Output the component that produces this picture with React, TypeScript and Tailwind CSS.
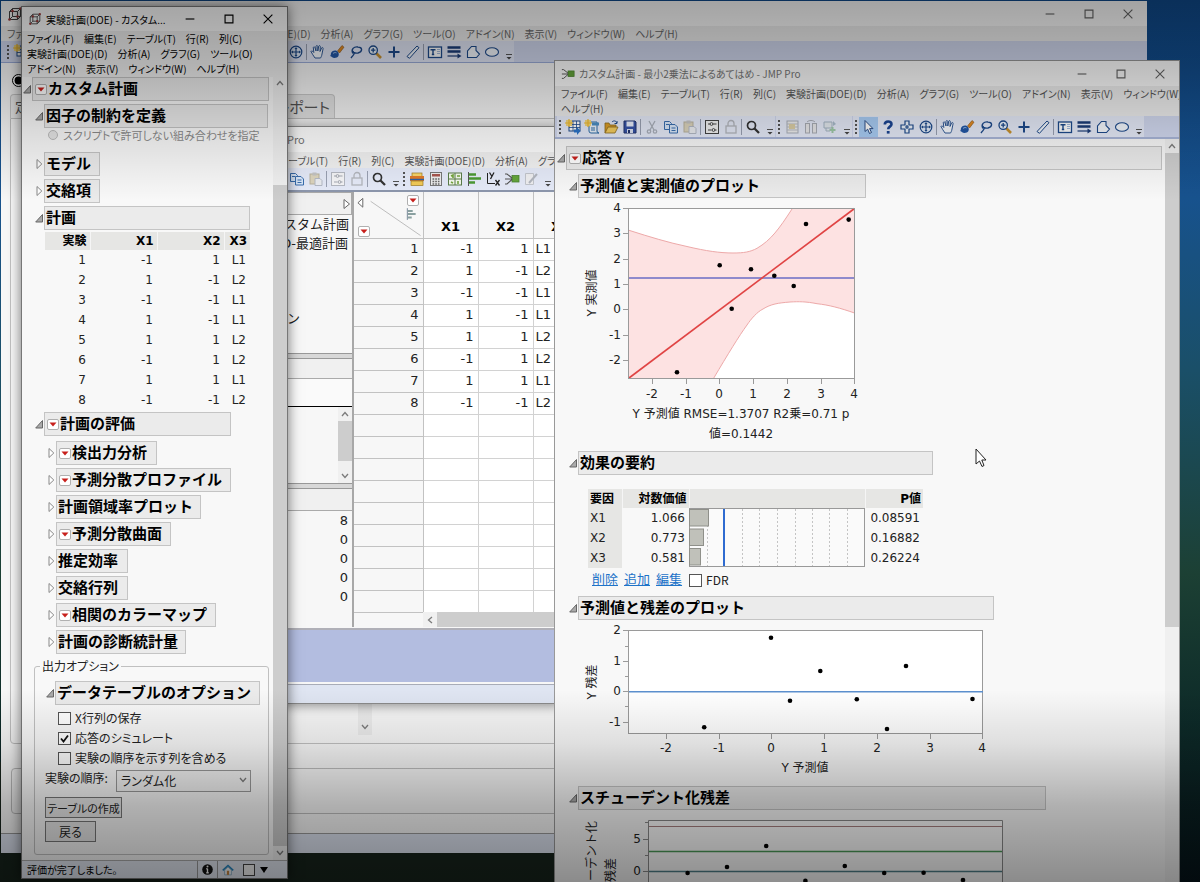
import React from "react";

const UI = "font-['Noto_Sans_CJK_JP',sans-serif] [font-feature-settings:'palt']";
const DATA = "font-['DejaVu_Sans','Noto_Sans_CJK_JP',sans-serif]";

/* ---------- icons ---------- */

const navy = "#1d4a8c";

const glyphs: Record<string, React.ReactNode> = {
  newTable: (
    <>
      <rect x="4" y="2" width="11" height="10" fill="#fff" stroke={navy} />
      <path d="M4 5.500h11M4 8.500h11M8 2v10M11.500 2v10" stroke={navy} fill="none" strokeWidth=".8" />
      <path d="M1 1h6v6H1z" fill="#f3d67a" />
      <path d="M4 0v8M0 4h8" stroke="#f0b92e" strokeWidth="1.200" />
      <path d="M9 10.500h3V8l3.500 4-3.500 4v-2.500H9z" fill="#2b74c9" />
    </>
  ),
  newScript: (
    <>
      <path d="M5 3h8v9a2 2 0 0 0 2 2H7a2 2 0 0 1-2-2z" fill="#eaf2fb" stroke="#2d6ca8" />
      <path d="M7 9h4M7 11h4" stroke="#2d6ca8" />
      <path d="M1 1h6v6H1z" fill="#f3d67a" />
      <path d="M4 0v8M0 4h8" stroke="#f0b92e" strokeWidth="1.200" />
      <path d="M8 3.500h7v3H8z" fill="#4b8fc4" />
    </>
  ),
  open: (
    <>
      <path d="M2 14V4h4l1 2h6v3" fill="#d99b25" stroke="#8a6a20" strokeWidth=".8" />
      <path d="M2 14l3-6h10l-3 6z" fill="#f5cd5f" stroke="#8a6a20" strokeWidth=".8" />
      <path d="M9 3c2-2 4-1 5 1m0-2v2.500h-2.500" stroke={navy} fill="none" />
    </>
  ),
  save: (
    <>
      <path d="M2 2h11l1 1v11H2z" fill="#3553a8" stroke="#22346e" />
      <rect x="4.500" y="2.500" width="7" height="5" fill="#e8eefc" />
      <rect x="5" y="10" width="6" height="4" fill="#dbe2f3" />
      <rect x="6" y="11" width="2" height="3" fill="#22346e" />
    </>
  ),
  cut: (
    <g stroke="#aab0bb" fill="none" strokeWidth="1.300">
      <path d="M5 2l5 9M11 2L6 11" />
      <circle cx="5" cy="12.500" r="1.700" />
      <circle cx="11" cy="12.500" r="1.700" />
    </g>
  ),
  copy: (
    <g fill="#dbe9fb" stroke="#3a6fb0">
      <path d="M1.500 2.500h5l2 2v6h-7z" />
      <path d="M6.500 5.500h5.500l2.500 2.500v6h-8z" />
      <path d="M3 5.500h3M8.500 9h4M8.500 11.500h4" />
    </g>
  ),
  paste: (
    <>
      <rect x="2" y="3" width="9" height="10" fill="#ddd5bd" stroke="#b9b39f" />
      <rect x="4.500" y="1.500" width="4" height="3" fill="#c4c4c4" />
      <path d="M7 7.500h5l2 2v5H7z" fill="#eceef2" stroke="#b4bac6" />
    </>
  ),
  toggle: (
    <>
      <rect x="1.500" y="1.500" width="13" height="13" fill="#f2f2f2" stroke="#444" />
      <path d="M4 5h2M9 5h3.500M4 11h3.500M11 11h1.500" stroke="#444" />
      <circle cx="7.500" cy="5" r="1.400" fill="#fff" stroke="#444" />
      <circle cx="9.500" cy="11" r="1.400" fill="#fff" stroke="#444" />
    </>
  ),
  toggleOff: (
    <>
      <rect x="1.500" y="1.500" width="13" height="13" fill="#f6f6f8" stroke="#b5b9c2" />
      <path d="M4 5h2M9 5h3.500M4 11h3.500M11 11h1.500" stroke="#a5a9b2" />
      <circle cx="7.500" cy="5" r="1.400" fill="none" stroke="#a5a9b2" />
      <circle cx="9.500" cy="11" r="1.400" fill="none" stroke="#a5a9b2" />
    </>
  ),
  lock: (
    <g stroke="#b4b7be" fill="none" strokeWidth="1.300">
      <path d="M5 7V4.500a3 3 0 0 1 6 0V7" />
      <rect x="3" y="7" width="10" height="7" />
    </g>
  ),
  search: (
    <g stroke="#333" fill="none">
      <circle cx="6.500" cy="6.500" r="4" strokeWidth="1.700" />
      <path d="M9.500 9.500l4.500 4.500" strokeWidth="2.300" />
    </g>
  ),
  dimDoc: (
    <>
      <rect x="3" y="2" width="11" height="12" fill="#eee" stroke="#a9afba" />
      <path d="M3 5h11M3 8h11M3 11h11" stroke="#b7bcc5" />
      <rect x="5" y="5" width="6" height="5" fill="#dccfa6" />
    </>
  ),
  dimCols: (
    <g stroke="#a9adb5" fill="#e8e8ea">
      <rect x="2.500" y="4.500" width="4" height="9.500" />
      <rect x="9.500" y="4.500" width="4" height="9.500" />
      <path d="M4 3c2-2 6-2 8 0" fill="none" />
    </g>
  ),
  dimFlow: (
    <>
      <path d="M2 3h8v6H2zM4 9v3h4" stroke="#a5b5c4" fill="#e3e9ee" />
      <path d="M10.500 8v6M7.500 11h6" stroke="#9fcaa8" strokeWidth="2" />
      <path d="M11 2l3 3-3 2z" fill="#a9bccb" />
    </>
  ),
  arrow: <path d="M4 1.500v11l2.700-2.300L8.500 14.500l2-1-1.900-3.900H12z" fill="#fff" stroke="#2a4d86" />,
  help: (
    <>
      <path d="M4.800 5.500c0-4 6.700-4 6.700-.3 0 2.500-3.300 2.300-3.300 5" stroke="#1b4593" strokeWidth="2.600" fill="none" />
      <rect x="6.800" y="12" width="2.800" height="2.600" fill="#1b4593" />
    </>
  ),
  cross: (
    <path
      d="M6 2h4v4h4v4h-4v4H6v-4H2V6h4zM8 6v4M6 8h4"
      fill="#eef4fc"
      stroke={navy}
      strokeWidth="1.200"
    />
  ),
  globe: (
    <g fill="none" stroke={navy}>
      <circle cx="8" cy="8" r="5.800" fill="#e2ecfa" strokeWidth="1.200" />
      <path d="M8 4.500v7M4.500 8h7" strokeWidth="1.200" />
      <path d="M8 3l1.500 2h-3zM8 13l1.500-2h-3zM3 8l2-1.500v3zM13 8l-2-1.500v3z" fill={navy} stroke="none" />
    </g>
  ),
  hand: (
    <path
      d="M5 14C3.500 12 2 9.500 1 7.500c.5-1 1.500-.6 2.800 1L3.300 3.500c.3-1 1.400-.9 1.700.2L6 7V2.300c.3-1 1.500-1 1.800 0V7l.9-4.800c.4-.9 1.500-.7 1.600.3L10 7.500l1.700-3.700c.6-.7 1.600-.2 1.400.8L12 10c-.3 2-.9 3-1.500 4z"
      fill="#f7faff"
      stroke={navy}
      strokeWidth=".9"
    />
  ),
  brush: (
    <>
      <path d="M8.500 7L13 1.500l2 1.700L10.500 9z" fill="#e28b24" stroke="#8b5415" strokeWidth=".6" />
      <path d="M2 9c2-3 5-3 7-1 2 3 0 6-3.500 6C3.500 14 2 12 1 12c1-.6.800-2 1-3z" fill="#2257a6" />
      <path d="M4 9.500c1-1 2.500-1.200 3.500-.6" stroke="#a9c8f1" fill="none" />
    </>
  ),
  lasso: (
    <g fill="none" stroke={navy} strokeWidth="1.400">
      <path d="M5 9.500C2.500 5 6 2.500 10 3c5 .5 4.500 5 0 6C7 9.500 4.500 8.500 5.500 7" />
      <path d="M6 8.500c1 2-1 2.500-3 5.500" />
    </g>
  ),
  zoom: (
    <>
      <path d="M9 9l5 5" stroke="#c8922f" strokeWidth="2.600" />
      <circle cx="6.200" cy="6.200" r="4.200" fill="#eaf3fd" stroke={navy} strokeWidth="1.300" />
      <path d="M4 6.200h4.400M6.200 4v4.400" stroke={navy} strokeWidth="1.300" />
    </>
  ),
  plus: <path d="M8 2.500v11M2.500 8h11" stroke={navy} strokeWidth="2" />,
  ruler: <path d="M2 12.500L12 2l2 1.700L4.500 14.300z" fill="#f2f6fc" stroke={navy} />,
  textBox: (
    <>
      <rect x="1.500" y="3" width="13" height="10.500" fill="#fff" stroke={navy} strokeWidth="1.300" />
      <path d="M3.500 5.700h5M6 5.500v5M4.800 10.500h2.400" stroke={navy} strokeWidth="1.400" />
      <path d="M10 5.500h3M10 7.500h3M10 9.500h3" stroke="#8daad5" strokeWidth=".8" />
    </>
  ),
  lines: (
    <>
      <path d="M1.500 3.500h13M1.500 7.500h13" stroke="#1b3c78" strokeWidth="2.400" />
      <path d="M1.500 12h12" stroke="#1b3c78" strokeWidth="1.200" />
      <path d="M11.500 9.500l4 2.500-4 2.500z" fill="#1b3c78" />
    </>
  ),
  polygon: <path d="M2.500 13.500V7l4-4.500H11v4l3.500 3.500-3 3.500z" fill="#f4f8fe" stroke={navy} strokeWidth="1.100" />,
  ellipse: <ellipse cx="8" cy="8" rx="6.500" ry="4.300" fill="#f4f8fe" stroke={navy} strokeWidth="1.100" />,
  printer: (
    <>
      <rect x="3" y="2" width="10" height="4" fill="#f7d56a" stroke="#9d7b24" strokeWidth=".7" />
      <rect x="1" y="5" width="14" height="5" fill="#de7a2a" />
      <path d="M1 8.500h14" stroke="#2c5fa6" strokeWidth="1.400" />
      <rect x="2" y="10" width="12" height="4.500" fill="#f3cb57" stroke="#9d7b24" strokeWidth=".7" />
    </>
  ),
  calc: (
    <>
      <rect x="2.500" y="1.500" width="11" height="13" fill="#eee" stroke="#777" />
      <rect x="4" y="3" width="8" height="2.500" fill="#a8564f" />
      <path d="M4.500 8h7M4.500 10.500h7M4.500 13h7" stroke="#666" strokeWidth="1.500" strokeDasharray="1.700 1" />
    </>
  ),
  greenTable: (
    <>
      <rect x="1.500" y="2" width="13" height="12" fill="#f5faee" stroke="#5b7d4a" />
      <path d="M8 2v12M1.500 8h13" stroke="#5b7d4a" />
      <path d="M4 5l2-1v3M10 5h3M4 11l2 1M11 10v3" stroke="#73a63d" strokeWidth="1.600" fill="none" />
    </>
  ),
  bars: (
    <>
      <path d="M2.500 1v14" stroke="#555" />
      <path d="M3 3.500h7M3 7.500h12M3 11.500h6" stroke="#4c9a34" strokeWidth="2.600" />
    </>
  ),
  axes: (
    <>
      <path d="M2.500 2v10.500H10" stroke="#222" fill="none" />
      <path d="M4.500 1.500l2.200 3.500M9 1.500L5.500 8" stroke="#222" strokeWidth="1.300" />
      <path d="M10.500 9l4 5.500M14.500 9l-4 5.500" stroke="#222" strokeWidth="1.300" />
    </>
  ),
  fit: (
    <>
      <rect x="8" y="4.500" width="7" height="6.500" fill="#65a63b" stroke="#4c8432" strokeWidth=".8" />
      <path d="M1 3h2l5 4M1 8h7M1 13h2l5-4.500" stroke="#555" strokeWidth="1.100" fill="none" />
    </>
  ),
  wand: (
    <>
      <path d="M2.500 2.500h8v11h-8z" fill="#f0f0f2" stroke="#c3c6cd" />
      <path d="M6 12l8-9" stroke="#b3b7c0" strokeWidth="2" />
    </>
  ),
  doe: (
    <g fill="none" stroke="#444">
      <path d="M2.500 5.500h8v8h-8zM5.500 2.500h8v8h-8zM2.500 5.500l3-3M10.500 5.500l3-3M2.500 13.500l3-3M10.500 13.500l3-3" />
      <g fill="#a33b3b" stroke="none">
        <circle cx="2.500" cy="13.500" r="1.300" />
        <circle cx="13.500" cy="2.500" r="1.300" />
        <circle cx="5.500" cy="5" r="1.300" />
        <circle cx="10.500" cy="10.500" r="1.300" />
      </g>
    </g>
  ),
  home: (
    <>
      <path d="M3.500 8v6.500h9V8L8 4z" fill="#f4f8fb" stroke="#7aa3bd" />
      <path d="M1 8.500L8 2l7 6.500" fill="none" stroke="#2485bf" strokeWidth="2" />
      <rect x="6.500" y="9" width="3" height="5.500" fill="#c4823f" />
    </>
  ),
  info: (
    <>
      <circle cx="8" cy="8" r="6.500" fill="#111" />
      <path d="M8 7v5M6.500 7H8M6.500 12h3" stroke="#fff" strokeWidth="1.700" />
      <circle cx="8" cy="4.400" r="1.200" fill="#fff" />
    </>
  ),
};

function Icon({ name, className = "size-4" }: { name: string; className?: string }) {
  return (
    <svg viewBox="0 0 16 16" className={`${className} shrink-0`} aria-hidden="true">
      {glyphs[name]}
    </svg>
  );
}

function Tools({ items }: { items: string[] }) {
  return (
    <>
      {items.map((item, i) => {
        if (item === "|") return <span key={i} className="mx-px h-4 w-px shrink-0 bg-[#9aa1b3]" />;
        if (item === ":") return <span key={i} className="mx-[2px] h-[14px] w-0 shrink-0 border-l-2 border-dotted border-[#555]" />;
        if (item === "v")
          return (
            <svg key={i} viewBox="0 0 8 16" className="mr-px ml-1 h-4 w-2 shrink-0" aria-hidden="true">
              <path d="M1 10.500h6" stroke="#555" />
              <path d="M1.500 13h5L4 15.500z" fill="#444" />
            </svg>
          );
        const active = item === "arrow";
        return (
          <button
            key={i}
            type="button"
            aria-label={item}
            className={`flex h-5 w-[19px] shrink-0 items-center justify-center ${active ? "bg-[#a9cdf5]" : ""}`}
          >
            <Icon name={item} />
          </button>
        );
      })}
    </>
  );
}

/* ---------- window parts ---------- */

function WindowButtons({ tone }: { tone: string }) {
  const shapes = ["M3 8h10", "M3.500 3.500h9v9h-9z", "M3 3l10 10M13 3L3 13"];
  const labels = ["最小化", "最大化", "閉じる"];
  return (
    <div className={`ml-auto flex shrink-0 ${tone}`}>
      {shapes.map((d, i) => (
        <button key={d} type="button" aria-label={labels[i]} className="flex h-6 w-[39px] items-center justify-center">
          <svg viewBox="0 0 16 16" className="size-[14px]" aria-hidden="true">
            <path d={d} fill="none" stroke="currentColor" strokeWidth="1.300" />
          </svg>
        </button>
      ))}
    </div>
  );
}

function MenuRow({ items, className = "" }: { items: string[]; className?: string }) {
  return (
    <div className={`flex gap-[10px] whitespace-nowrap text-[10px] leading-[15px] ${UI} ${className}`}>
      {items.map((m) => (
        <button key={m} type="button" className="shrink-0">
          {m}
        </button>
      ))}
    </div>
  );
}

function RedMenu() {
  return (
    <button type="button" aria-label="メニュー" className="flex h-[11px] w-3 shrink-0 items-center justify-center rounded-[2px] border border-[#b0b0b0] bg-white">
      <svg viewBox="0 0 8 5" className="h-[5px] w-2" aria-hidden="true">
        <path d="M0.500 0.500h7L4 4.500z" fill="#c8201c" />
      </svg>
    </button>
  );
}

function Outline({
  title,
  width,
  open = false,
  menu = false,
  className = "",
}: {
  title: string;
  width: string;
  open?: boolean;
  menu?: boolean;
  className?: string;
}) {
  return (
    <div className={`flex items-center ${className}`}>
      <button type="button" aria-label={`${title} の開閉`} aria-expanded={open} className="w-[9px] shrink-0">
        <svg viewBox="0 0 9 12" className="h-3 w-[9px]" aria-hidden="true">
          {open ? (
            <path d="M7.500 2.500v7.500H.7z" fill="#aaa" stroke="#666" />
          ) : (
            <path d="M2 1.500v9L6.800 6z" fill="#fff" stroke="#888" />
          )}
        </svg>
      </button>
      <div className={`flex h-6 items-center gap-px border border-[#c4c4c4] bg-[#ebebeb] ${menu ? "pl-[2px]" : "pl-px"} ${width}`}>
        {menu && <RedMenu />}
        <h2 className="whitespace-nowrap pb-[3px] font-['Noto_Sans_CJK_JP',sans-serif] text-[15px] leading-5 font-bold text-black [font-feature-settings:normal]">
          {title}
        </h2>
      </div>
    </div>
  );
}

function Chevron({ dir }: { dir: "up" | "down" | "left" }) {
  const d = { up: "M1 6l3-3.500L7 6", down: "M1 2l3 3.500L7 2", left: "M6 1L2.500 4 6 7" }[dir];
  return (
    <svg viewBox="0 0 8 8" className="size-2" aria-hidden="true">
      <path d={d} fill="none" stroke="#7b7b7b" strokeWidth="1.300" />
    </svg>
  );
}

/* ---------- back window ---------- */

function BackWindow() {
  return (
    <section className="absolute top-px left-px flex h-[852px] w-[1146px] flex-col bg-[#f7f7f7]">
      <header className="flex h-[25px] items-center bg-white pl-[6px] text-[#555]">
        <Icon name="doe" />
        <WindowButtons tone="text-[#666]" />
      </header>
      <div className="flex h-[15px] items-center bg-[#f0f0f0] pl-[6px] text-[#666]">
        <MenuRow items={["ファイル(F)"]} />
        <MenuRow
          className="ml-44"
          items={["実験計画(DOE)(D)", "分析(A)", "グラフ(G)", "ツール(O)", "アドイン(N)", "表示(V)", "ウィンドウ(W)", "ヘルプ(H)"]}
        />
      </div>
      <div className="flex h-[22px] items-center border-b border-[#9bacd8] bg-[#d2d9f0]">
        <div className="flex items-center pl-1">
          <Tools items={[":", "newTable"]} />
        </div>
        <div className="ml-[256px] flex h-full items-center bg-[#e3e8f8]">
          <Tools items={["globe", "|", "hand", "brush", "lasso", "zoom", "plus", "ruler", "|", "textBox", "lines", "polygon", "ellipse", "v"]} />
        </div>
      </div>
      <div className="px-[11px] pt-[11px]">
        <input type="radio" name="view" defaultChecked aria-label="表示形式" className="block size-[13px] accent-black" />
      </div>
      <div className="mt-[7px] flex items-end px-[9px] text-[#555]">
        <button type="button" className={`h-6 w-40 rounded-t border border-b-0 border-[#c8c8c8] bg-[#efefef] px-1 text-left text-[14px] ${UI}`}>定義</button>
        <button type="button" className={`ml-24 h-6 w-[69px] rounded-t border border-b-0 border-[#c8c8c8] bg-[#e4e4e4] pr-1 text-right text-[15px] leading-5 ${UI}`}>
          レポート
        </button>
      </div>
      <div className="mx-[9px] flex flex-1 items-end rounded-b border border-[#c0c0c0] pb-2">
        <div className="ml-[347px] flex h-8 w-[14px] items-end justify-center bg-[#ececec] pb-1">
          <Chevron dir="down" />
        </div>
      </div>
      <div className="mx-[10px] mt-6 mb-[19px] h-[46px] rounded border border-[#bdbdbd]" />
      <footer className="h-5 border-t border-[#9a9a9a] bg-[#dfe5f2]" />
    </section>
  );
}

/* ---------- data table window ---------- */

const design: [string, string, string][] = [
  ["-1", "1", "L1"],
  ["1", "-1", "L2"],
  ["-1", "-1", "L1"],
  ["1", "-1", "L1"],
  ["1", "1", "L2"],
  ["-1", "1", "L2"],
  ["1", "1", "L1"],
  ["-1", "-1", "L2"],
];

function TableWindow() {
  const rows = Array.from({ length: 17 }, (_, i) => design[i]);
  return (
    <section className="absolute top-[126px] left-[270px] flex h-[578px] w-[290px] flex-col overflow-hidden border border-[#8a8a8a] bg-[#f7f7f7] shadow-[0_2px_10px_rgba(0,0,0,0.4)]">
      <header className={`flex h-[25px] shrink-0 items-center bg-white pl-4 text-[11px] text-[#777] ${UI}`}>Pro</header>
      <div className="flex h-4 shrink-0 items-center bg-[#f2f2f2] pl-2 text-[#555]">
        <MenuRow items={["テーブル(T)", "行(R)", "列(C)", "実験計画(DOE)(D)", "分析(A)", "グラフ(G)"]} />
      </div>
      <div className="flex h-[22px] shrink-0 items-center bg-[#e6ebf9] pl-4">
        <Tools items={["copy", "paste", "|", "toggleOff", "lock", "|", "search", "v", ":", "printer", "calc", "greenTable", "bars", "axes", "fit", "wand", "v"]} />
      </div>
      <div className="flex h-[437px] shrink-0 border-t-2 border-[#8d97ad]">
        <div className={`flex w-[83px] shrink-0 flex-col border-r-2 border-[#a8a8a8] text-right text-[13px] leading-[19px] text-[#222] ${DATA}`}>
          <div className="flex h-[23px] items-center justify-end border border-[#aaa] bg-[#f0f0f0]">
            <svg viewBox="0 0 8 12" className="h-3 w-2" aria-hidden="true">
              <path d="M1 1.500v9L6.500 6z" fill="#fff" stroke="#666" />
            </svg>
          </div>
          <div className="flex h-[138px] flex-col whitespace-nowrap pr-1">
            <span>カスタム計画</span>
            <span>D-最適計画</span>
            <span className="mt-14 pr-12">ン</span>
          </div>
          <div className="h-[6px] border-y border-[#999] bg-[#d8d8d8]" />
          <div className="h-5 border-b border-[#aaa] bg-[#f0f0f0]" />
          <div className="h-7 border-b border-black bg-[#fafafa]" />
          <div className="flex h-[76px] justify-end">
            <div className="flex w-[14px] flex-col items-center bg-[#f0f0f0]">
              <span className="flex h-[14px] items-center"><Chevron dir="up" /></span>
              <span className="h-10 w-full bg-[#cdcdcd]" />
              <span className="mt-auto flex h-[14px] items-center"><Chevron dir="down" /></span>
            </div>
          </div>
          <div className="h-[6px] border-y border-[#999] bg-[#d8d8d8]" />
          <div className="h-[22px] border-b border-[#aaa] bg-[#f0f0f0]" />
          <div className="flex flex-col pr-1">
            {["8", "0", "0", "0", "0"].map((n, i) => (
              <span key={i}>{n}</span>
            ))}
          </div>
        </div>
        <div className="relative min-w-0 flex-1 overflow-hidden">
          <table className={`w-[234px] table-fixed border-collapse text-[13px] text-[#222] ${DATA}`}>
            <colgroup>
              <col className="w-[69px]" />
              <col className="w-[55px]" />
              <col className="w-[55px]" />
              <col className="w-[55px]" />
            </colgroup>
            <thead>
              <tr className="h-[46px] align-bottom">
                <th className="border-r border-b border-[#c2c2c2] p-0">
                  <div className="relative h-[45px]">
                    <svg viewBox="0 0 70 45" className="absolute inset-0 size-full" aria-hidden="true">
                      <path d="M9 5L4 9.500 9 14z" fill="#fff" stroke="#666" />
                      <path d="M17 8L68 43" stroke="#bbb" />
                      <path d="M54.500 15v12" stroke="#789" />
                      <path d="M55 18h5M55 21h8M55 24.500h4" stroke="#8aa0a0" strokeWidth="2" />
                    </svg>
                    <span className="absolute top-[2px] right-1 flex"><RedMenu /></span>
                    <span className="absolute bottom-px left-1 flex"><RedMenu /></span>
                  </div>
                </th>
                {["X1", "X2", "X3"].map((h) => (
                  <th key={h} className="border-r border-b border-[#c2c2c2] pb-px text-black">{h}</th>
                ))}
              </tr>
            </thead>
            <tbody>
              {rows.map((r, i) => (
                <tr key={i} className="h-[22px] leading-[18px]">
                  <td className="border-r border-b border-[#c2c2c2] p-0 pr-1 text-right">{r ? i + 1 : ""}</td>
                  <td className="border-r border-b border-[#d2d2d2] bg-white p-0 pr-1 text-right">{r?.[0]}</td>
                  <td className="border-r border-b border-[#d2d2d2] bg-white p-0 pr-1 text-right">{r?.[1]}</td>
                  <td className="border-b border-[#d2d2d2] bg-white p-0 pl-[2px]">{r?.[2]}</td>
                </tr>
              ))}
            </tbody>
          </table>
          <div className="absolute right-0 bottom-0 left-[69px] flex h-[15px] bg-[#cdcdcd]">
            <span className="flex w-[14px] items-center justify-center bg-[#f0f0f0]"><Chevron dir="left" /></span>
          </div>
        </div>
      </div>
      <div className="mt-px h-[54px] shrink-0 border-t-2 border-[#b0b0b8] bg-[#b3bde0]" />
      <div className="mt-[2px] flex-1 border-t border-[#a8acb8] bg-[#dfe5f2]" />
    </section>
  );
}

/* ---------- custom design window ---------- */

function Check({ label, checked = false }: { label: string; checked?: boolean }) {
  return (
    <label className="flex h-5 items-center gap-1">
      <span className="relative flex size-[13px]">
        <input type="checkbox" defaultChecked={checked} className="peer size-[13px] appearance-none border border-[#555] bg-white" />
        <svg viewBox="0 0 13 13" className="pointer-events-none absolute inset-0 hidden peer-checked:block" aria-hidden="true">
          <path d="M3 6.500l2.500 3L10 3.500" fill="none" stroke="#111" strokeWidth="1.800" />
        </svg>
      </span>
      {label}
    </label>
  );
}

function DesignWindow() {
  return (
    <section className="absolute top-[6px] left-[21px] flex h-[873px] w-[267px] flex-col border border-[#777] bg-[#f8f8f8] shadow-[0_0_12px_rgba(0,0,0,0.55)]">
      <header className={`flex h-6 shrink-0 items-center bg-white pl-[6px] text-black ${UI}`}>
        <Icon name="doe" className="mr-1 size-[14px]" />
        <h1 className="whitespace-nowrap text-[10px]">実験計画(DOE) - カスタム...</h1>
        <WindowButtons tone="text-black" />
      </header>
      <nav className="flex h-[46px] shrink-0 flex-col bg-[#f0f0f0] pl-[5px] text-black">
        <MenuRow items={["ファイル(F)", "編集(E)", "テーブル(T)", "行(R)", "列(C)"]} />
        <MenuRow items={["実験計画(DOE)(D)", "分析(A)", "グラフ(G)", "ツール(O)"]} />
        <MenuRow items={["アドイン(N)", "表示(V)", "ウィンドウ(W)", "ヘルプ(H)"]} />
      </nav>
      <div className="flex min-h-0 flex-1">
        <main className="flex min-w-0 flex-1 flex-col">
          <Outline title="カスタム計画" width="w-[237px]" open menu className="ml-px" />
          <Outline title="因子の制約を定義" width="w-[224px]" open className="mt-[3px] ml-[13px]" />
          <label className={`ml-[26px] flex h-[14px] items-center gap-[5px] whitespace-nowrap text-[11px] leading-[14px] text-[#8a8a8a] ${UI}`}>
            <input type="radio" disabled className="size-[10px] shrink-0 appearance-none rounded-full border border-[#bbb] bg-[#e6e6e6]" />
            スクリプトで許可しない組み合わせを指定
          </label>
          <div className="mt-[10px] ml-[13px] flex flex-col gap-[3px]">
            <Outline title="モデル" width="w-14" />
            <Outline title="交絡項" width="w-14" />
            <Outline title="計画" width="w-[206px]" open />
          </div>
          <table className={`mt-[2px] ml-[23px] h-[178px] w-[205px] table-fixed text-[12px] leading-[18px] text-[#222] ${DATA}`}>
            <colgroup>
              <col className="w-[45px]" />
              <col className="w-[67px]" />
              <col className="w-[67px]" />
              <col className="w-[26px]" />
            </colgroup>
            <thead>
              <tr className="bg-[#e6e6e4] text-black">
                <th className="border-r border-[#f5f5f5] p-0 pr-[3px] text-right">実験</th>
                <th className="border-r border-[#f5f5f5] p-0 pr-[3px] text-right">X1</th>
                <th className="border-r border-[#f5f5f5] p-0 pr-[3px] text-right">X2</th>
                <th className="p-0 pr-[3px] text-right">X3</th>
              </tr>
            </thead>
            <tbody>
              {design.map((r, i) => (
                <tr key={i}>
                  <td className="p-0 pr-1 text-right">{i + 1}</td>
                  <td className="p-0 pr-1 text-right">{r[0]}</td>
                  <td className="p-0 pr-1 text-right">{r[1]}</td>
                  <td className="p-0 pr-1 text-right">{r[2]}</td>
                </tr>
              ))}
            </tbody>
          </table>
          <Outline title="計画の評価" width="w-[187px]" open menu className="mt-[2px] ml-[13px]" />
          <div className="mt-[5px] ml-[25px] flex flex-col gap-[3px]">
            <Outline title="検出力分析" width="w-[101px]" menu />
            <Outline title="予測分散プロファイル" width="w-[175px]" menu />
            <Outline title="計画領域率プロット" width="w-[145px]" />
            <Outline title="予測分散曲面" width="w-[115px]" menu />
            <Outline title="推定効率" width="w-[72px]" />
            <Outline title="交絡行列" width="w-[72px]" />
            <Outline title="相関のカラーマップ" width="w-[160px]" menu />
            <Outline title="計画の診断統計量" width="w-[130px]" />
          </div>
          <fieldset className={`mt-[3px] mr-1 ml-3 flex h-[198px] flex-col rounded-[3px] border border-[#c0c0c0] text-[12px] text-[#222] ${UI}`}>
            <legend className="ml-[5px] px-[2px] leading-[18px]">出力オプション</legend>
            <Outline title="データテーブルのオプション" width="w-[205px]" open className="mt-[6px] ml-[11px]" />
            <div className="mt-[3px] ml-[23px] flex flex-col">
              <Check label="X行列の保存" />
              <Check label="応答のシミュレート" checked />
              <Check label="実験の順序を示す列を含める" />
            </div>
            <div className="ml-[10px] flex items-start gap-2">
              <label htmlFor="order" className="leading-5">実験の順序:</label>
              <span className="relative mt-[2px]">
                <select id="order" className="h-[22px] w-[135px] appearance-none border border-[#999] bg-[#f4f4f4] pl-1 text-[12px]">
                  <option>ランダム化</option>
                </select>
                <span className="pointer-events-none absolute top-[6px] right-1"><Chevron dir="down" /></span>
              </span>
            </div>
            <div className="mt-[5px] ml-[10px] flex flex-col items-start gap-[3px]">
              <button type="button" className="h-[21px] w-[77px] whitespace-nowrap border border-[#777] bg-[#e8e8e8] text-[11px] leading-[18px]">テーブルの作成</button>
              <button type="button" className="h-[21px] w-[51px] border border-[#777] bg-[#e8e8e8] leading-[18px]">戻る</button>
            </div>
          </fieldset>
        </main>
        <div className="flex w-[14px] shrink-0 flex-col items-center bg-[#f0f0f0]">
          <span className="flex h-3 items-center"><Chevron dir="up" /></span>
          <span className="mt-24 w-full flex-1 bg-[#cdcdcd]" />
          <span className="flex h-[14px] items-center"><Chevron dir="down" /></span>
        </div>
      </div>
      <footer className={`flex h-[18px] shrink-0 items-center border-t border-[#aaa] bg-[#e3e8f2] pl-[5px] text-[10px] text-black ${UI}`}>
        <span>評価が完了しました。</span>
        <span className="ml-auto flex h-full items-center border-l border-[#999] px-[3px]"><Icon name="info" className="size-[13px]" /></span>
        <span className="flex h-full items-center gap-[9px] border-l border-[#999] pr-[19px] pl-1">
          <Icon name="home" className="size-3" />
          <span className="flex items-center gap-[5px]">
            <span className="size-3 border border-[#444] bg-[#f4f4f4]" />
            <svg viewBox="0 0 8 6" className="h-[6px] w-2" aria-hidden="true"><path d="M0 0h8L4 6z" /></svg>
          </span>
        </span>
      </footer>
    </section>
  );
}

/* ---------- charts (drawn in desktop coordinates) ---------- */

const chartText = "font-['DejaVu_Sans','Noto_Sans_CJK_JP',sans-serif] text-[12px]";

function Dots({ points }: { points: [number, number][] }) {
  return (
    <>
      {points.map(([x, y]) => (
        <circle key={`${x}-${y}`} cx={x} cy={y} r="2.300" fill="#000" />
      ))}
    </>
  );
}

function Labels({ items, at, axis }: { items: [string, number][]; at: number; axis: "x" | "y" }) {
  return (
    <>
      {items.map(([t, p]) =>
        axis === "x" ? (
          <text key={t} x={p} y={at} textAnchor="middle">{t}</text>
        ) : (
          <text key={t} x={at} y={p + 4} textAnchor="end">{t}</text>
        ),
      )}
    </>
  );
}

function ActualPlot() {
  return (
    <svg viewBox="566 200 310 204" className={`block h-[204px] w-[310px] ${chartText}`} fill="#222">
      <rect x="628.500" y="208.500" width="226" height="170" fill="#fff" />
      <path
        d="M629 230.300C650 237 668 242.500 687 246.500C706 251 720 253 733 253C744 253 750 252 757 248.300C771 240 779 229 792 209H854.500V313C840 308 829 305 817 303.700C806 301.500 799 301.500 790 302C778 303 771 304 763 309C757 312 751 319 747 325C739 336 728 354 713.500 378.500H629Z"
        fill="#fde2e2"
      />
      <path
        d="M629 230.300C650 237 668 242.500 687 246.500C706 251 720 253 733 253C744 253 750 252 757 248.300C771 240 779 229 792 209M854.500 313C840 308 829 305 817 303.700C806 301.500 799 301.500 790 302C778 303 771 304 763 309C757 312 751 319 747 325C739 336 728 354 713.500 378.500"
        fill="none"
        stroke="#eda9a9"
      />
      <path d="M629 278H855" stroke="#6a6cc4" strokeWidth="1.500" />
      <path d="M629 378L854.500 208.500" stroke="#e04444" strokeWidth="1.600" />
      <rect x="628.500" y="208.500" width="226" height="170" fill="none" stroke="#9a9a9a" />
      <path
        d="M623 208.500h5M623 233.500h5M623 259.500h5M623 284.500h5M623 309.500h5M623 335.500h5M623 360.500h5M652.500 379v5M686.500 379v5M719.500 379v5M753.500 379v5M787.500 379v5M821.500 379v5M854.500 379v5"
        stroke="#9a9a9a"
      />
      <Dots points={[[719.7, 265.3], [751, 269.3], [774.3, 275.7], [793.7, 286], [731.7, 308.7], [677, 372.3], [806, 224], [848.7, 219.6]]} />
      <Labels axis="y" at={621} items={[["4", 208], ["3", 233], ["2", 259], ["1", 284], ["0", 309], ["-1", 335], ["-2", 360]]} />
      <Labels axis="x" at={398} items={[["-2", 652], ["-1", 686], ["0", 719], ["1", 753], ["2", 787], ["3", 821], ["4", 854]]} />
      <text transform="translate(596 293) rotate(-90)" textAnchor="middle">Y 実測値</text>
    </svg>
  );
}

function ResidualPlot() {
  return (
    <svg viewBox="566 622 440 154" className={`block h-[154px] w-[440px] ${chartText}`} fill="#222">
      <rect x="628.500" y="630.500" width="354" height="103" fill="#fff" stroke="#9a9a9a" />
      <path d="M629 691.700h354" stroke="#5c8fce" strokeWidth="1.500" />
      <path
        d="M623 630.500h5M625 646.500h3M623 661.500h5M625 676.500h3M623 691.500h5M625 706.500h3M623 722.500h5M666.500 734v5M719.500 734v5M771.500 734v5M824.500 734v5M877.500 734v5M930.500 734v5M982.500 734v5"
        stroke="#9a9a9a"
      />
      <Dots points={[[771, 637.7], [820.3, 671], [906, 666], [790, 700.7], [856.8, 699.3], [972.5, 699], [704.2, 727.3], [887, 729]]} />
      <Labels axis="y" at={621} items={[["2", 630], ["1", 661], ["0", 691], ["-1", 722]]} />
      <Labels axis="x" at={752} items={[["-2", 666], ["-1", 719], ["0", 771], ["1", 824], ["2", 877], ["3", 930], ["4", 982]]} />
      <text x="805" y="772" textAnchor="middle">Y 予測値</text>
      <text transform="translate(596 682) rotate(-90)" textAnchor="middle">Y 残差</text>
    </svg>
  );
}

function StudentPlot() {
  return (
    <svg viewBox="566 815 440 67" className={`block h-[67px] w-[440px] ${chartText}`} fill="#222">
      <path d="M648.500 884V820.500H1002.500V884" fill="#fff" stroke="#8a8a8a" />
      <path d="M649 826.500h353" stroke="#a98080" />
      <path d="M649 851.500h353" stroke="#4b9b58" strokeWidth="1.300" />
      <path d="M649 871.500h353" stroke="#4f8089" strokeWidth="1.300" />
      <path d="M645 822.500h3M643 839.500h5M645 855.500h3M643 871.500h5" stroke="#8a8a8a" />
      <Dots points={[[687.6, 873], [727, 867], [766.2, 846], [805.4, 880.7], [844.8, 866], [884.2, 873], [923.6, 872.7], [963, 880]]} />
      <Labels axis="y" at={641} items={[["5", 839], ["0", 871]]} />
      <text transform="translate(596 821) rotate(-90)" textAnchor="end">スチューデント化</text>
      <text transform="translate(615 858) rotate(-90)" textAnchor="end">残差</text>
    </svg>
  );
}

/* ---------- report window ---------- */

const effects = [
  { name: "X1", log: "1.066", p: "0.08591", value: 19 },
  { name: "X2", log: "0.773", p: "0.16882", value: 14 },
  { name: "X3", log: "0.581", p: "0.26224", value: 11 },
];

function EffectBars() {
  return (
    <svg viewBox="0 0 176 59" className="block h-[59px] w-44" role="img" aria-label="対数価値">
      <rect x=".5" y=".5" width="175" height="58" fill="#fafafa" stroke="#999" />
      <path d="M18.500 1v57M53.500 1v57M70.500 1v57M88.500 1v57M106.500 1v57M123.500 1v57M140.500 1v57M158.500 1v57" stroke="#c4c4c4" strokeDasharray="2 2" />
      {effects.map((e, i) => (
        <rect key={e.name} x=".5" y={1.5 + i * 19.5} width={e.value} height="16.500" fill="#c0c1ba" stroke="#8f908a" />
      ))}
      <path d="M35 1v57" stroke="#2f6bd0" strokeWidth="2" />
    </svg>
  );
}

function ReportWindow() {
  return (
    <section className="absolute top-[60px] bottom-0 left-[554px] flex w-[626px] flex-col overflow-hidden border border-b-0 border-[#999] bg-[#f8f8f8]">
      <header className={`flex h-[25px] shrink-0 items-center bg-white pl-[6px] text-[10px] text-[#777] ${UI}`}>
        <Icon name="fit" className="mr-1 size-[14px]" />
        <h1 className="whitespace-nowrap">カスタム計画 - 最小2乗法によるあてはめ - JMP Pro</h1>
        <WindowButtons tone="text-[#666]" />
      </header>
      <nav className="shrink-0 bg-[#f0f0f0] pl-[6px] text-[#555]">
        <MenuRow
          items={["ファイル(F)", "編集(E)", "テーブル(T)", "行(R)", "列(C)", "実験計画(DOE)(D)", "分析(A)", "グラフ(G)", "ツール(O)", "アドイン(N)", "表示(V)", "ウィンドウ(W)"]}
        />
        <MenuRow items={["ヘルプ(H)"]} />
      </nav>
      <div className="flex h-[23px] shrink-0 items-center border-b-2 border-[#a9b6d8] bg-[#d2d9f0] pl-[2px]">
        <div className="flex h-full items-center bg-[#e6ebf9]">
          <Tools items={[":", "newTable", "newScript", "open", "save", "|", "cut", "copy", "paste", "|", "toggle", "lock", "|", "search", "v"]} />
        </div>
        <div className="flex h-full items-center border-l border-[#d2d9f0] bg-[#e6ebf9]">
          <Tools items={[":", "dimDoc", "dimCols", "dimFlow", "v"]} />
        </div>
        <div className="flex h-full items-center border-l border-[#d2d9f0] bg-[#e6ebf9]">
          <Tools
            items={[":", "arrow", "help", "cross", "globe", "|", "hand", "brush", "lasso", "zoom", "plus", "ruler", "|", "textBox", "lines", "polygon", "ellipse", "v"]}
          />
        </div>
      </div>
      <div className="flex min-h-0 flex-1">
        <main className="min-w-0 flex-1 overflow-hidden pt-[7px] pl-[2px]">
          <Outline title="応答 Y" width="w-[596px]" open menu />
          <div className="pl-[9px]">
            <Outline title="予測値と実測値のプロット" width="w-[288px]" open className="mt-1 ml-[3px]" />
            <div className="mt-[2px]">
              <ActualPlot />
            </div>
            <p className={`ml-[60px] w-[230px] text-center text-[12px] leading-5 text-[#222] ${DATA}`}>
              Y 予測値 RMSE=1.3707 R2乗=0.71 p
              <br />
              値=0.1442
            </p>
            <Outline title="効果の要約" width="w-[355px]" open className="mt-[7px] ml-[3px]" />
            <table className={`mt-[14px] ml-[22px] w-[335px] table-fixed text-[12px] leading-[18px] text-[#222] ${DATA}`}>
              <colgroup>
                <col className="w-[34px]" />
                <col className="w-[67px]" />
                <col className="w-44" />
                <col className="w-[58px]" />
              </colgroup>
              <thead>
                <tr className="h-[19px] bg-[#e6e6e4] text-black">
                  <th className="border-r border-[#f5f5f5] p-0 pl-[2px] text-left">要因</th>
                  <th className="border-r border-[#f5f5f5] p-0 pr-[2px] text-right">対数価値</th>
                  <th className="border-r border-[#f5f5f5] p-0" aria-label="グラフ" />
                  <th className="p-0 pr-[2px] text-right">P値</th>
                </tr>
              </thead>
              <tbody>
                {effects.map((e, i) => (
                  <tr key={e.name} className="h-5">
                    <td className="bg-[#e6e6e4] p-0 pl-[2px]">{e.name}</td>
                    <td className="p-0 pr-1 text-right">{e.log}</td>
                    {i === 0 && (
                      <td rowSpan={3} className="p-0 align-top">
                        <EffectBars />
                      </td>
                    )}
                    <td className="p-0 pr-[3px] text-right">{e.p}</td>
                  </tr>
                ))}
              </tbody>
            </table>
            <div className={`mt-[2px] ml-[26px] flex h-5 items-center gap-[6px] text-[13px] text-[#1e73c8] ${DATA}`}>
              <a href="#remove" className="underline">削除</a>
              <a href="#add" className="underline">追加</a>
              <a href="#edit" className="underline">編集</a>
              <span className={`ml-px text-[12px] text-[#222] ${UI}`}>
                <Check label="FDR" />
              </span>
            </div>
            <Outline title="予測値と残差のプロット" width="w-[416px]" open className="mt-[6px] ml-[3px]" />
            <div className="mt-[2px]">
              <ResidualPlot />
            </div>
            <Outline title="スチューデント化残差" width="w-[468px]" open className="mt-[10px] ml-[3px]" />
            <div className="mt-[5px]">
              <StudentPlot />
            </div>
          </div>
        </main>
        <div className="flex w-[14px] shrink-0 flex-col items-center bg-[#f0f0f0]">
          <span className="flex h-[14px] items-center"><Chevron dir="up" /></span>
          <span className="h-[474px] w-full bg-[#cdcdcd]" />
        </div>
      </div>
    </section>
  );
}

export default function App() {
  return (
    <div className="relative h-screen w-full overflow-hidden bg-[linear-gradient(to_bottom,#0f4a8c_0%,#17528e_22%,#1a4f68_42%,#1c4034_65%,#0d2a28_82%,#06141a_100%)]">
      <div className="absolute inset-x-0 bottom-0 h-[120px] w-[1180px] bg-[#17241c]" />
      <BackWindow />
      <TableWindow />
      <ReportWindow />
      <DesignWindow />
      <svg viewBox="0 0 12 20" className="absolute top-[448px] left-[975px] h-5 w-3" aria-hidden="true">
        <path d="M1 1v15l3.500-3L7 18.500l2-1L6.800 12H11z" fill="#fff" stroke="#222" />
      </svg>
      <div className="pointer-events-none absolute inset-x-0 top-0 h-[200px] bg-[linear-gradient(to_bottom,rgba(0,0,0,0.36)_0%,rgba(0,0,0,0.25)_35%,rgba(0,0,0,0.12)_65%,transparent_100%)]" />
      <div className="pointer-events-none absolute inset-x-0 bottom-0 h-[192px] bg-[linear-gradient(to_top,rgba(0,0,0,0.44)_0%,rgba(0,0,0,0.29)_40%,rgba(0,0,0,0.1)_72%,transparent_100%)]" />
    </div>
  );
}
